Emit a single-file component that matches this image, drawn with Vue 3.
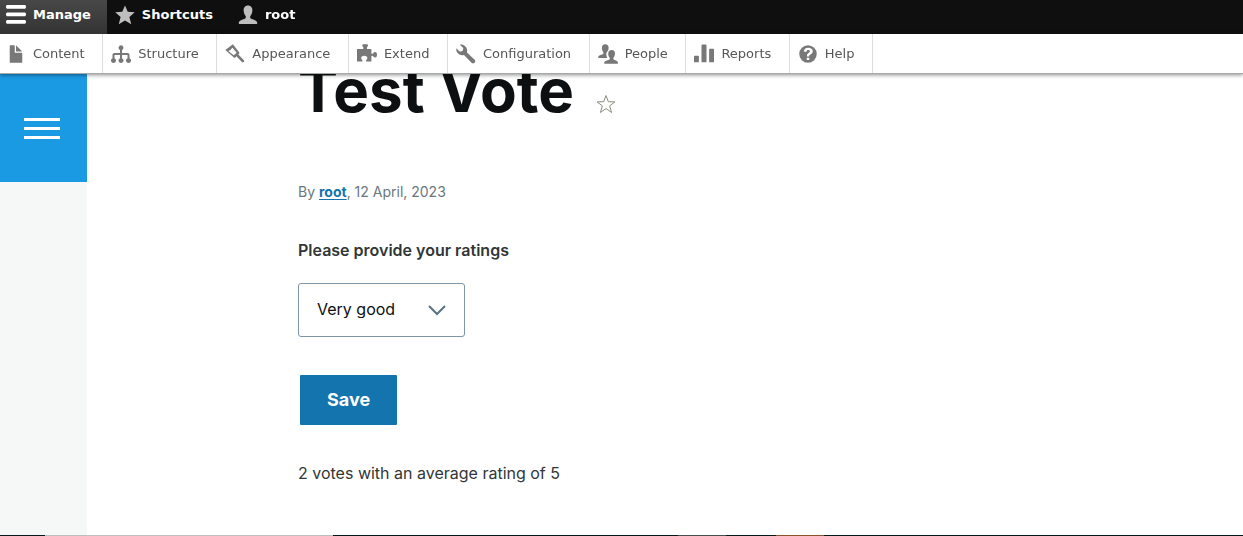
<script setup>
import { ref } from 'vue'

const rating = ref('Very good')
const ratings = ['Very poor', 'Poor', 'Average', 'Good', 'Very good']

const tabs = [
  { name: 'Manage', active: true, path: 'M14.75 6H1.25C.56 6 0 6.56 0 7.25v.5C0 8.44.56 9 1.25 9h13.5C15.44 9 16 8.44 16 7.75v-.5C16 6.56 15.44 6 14.75 6zM14.75 0H1.25C.56 0 0 .56 0 1.25v.5C0 2.44.56 3 1.25 3h13.5C15.44 3 16 2.44 16 1.75v-.5C16 .56 15.44 0 14.75 0zM14.75 12H1.25C.56 12 0 12.56 0 13.25v.5c0 .69.56 1.25 1.25 1.25h13.5c.69 0 1.25-.56 1.25-1.25v-.5c0-.69-.56-1.25-1.25-1.25z' },
  { name: 'Shortcuts', path: 'M8 .3l2.200 5.100 5.600.4-4.300 3.700 1.500 5.900L8 12.300l-5 3.100 1.500-5.900L.2 5.800l5.600-.4z' },
  { name: 'root', path: 'M8 .3C5.7.3 4.4 2 4.5 4.3c.1 1.7.6 3.2 1.5 4.3.5.7.4 1.9-.4 2.3C3.5 11.700.9 12.300.6 14.100c-.1.7.2 1.100.9 1.100h13c.7 0 1-.4.9-1.100-.3-1.800-2.900-2.400-5-3.200-.8-.4-.9-1.600-.4-2.300.9-1.100 1.400-2.600 1.500-4.300C11.600 2 10.300.3 8 .3z' }
]

const links = [
  { name: 'Content', path: 'M12.502 7h-5c-.276 0-.502-.225-.502-.5v-5c0-.275-.225-.5-.5-.5h-3c-.276 0-.5.225-.5.5v13.029c0 .275.225.5.5.5h9.002c.275 0 .5-.225.5-.5V7.5c0-.275-.225-.5-.5-.5zM8.502 6h4c.275 0 .34-.159.146-.354L8.355 1.354C8.16 1.159 8.002 1.225 8.002 1.5v4c0 .275.225.5.5.5z' },
  { name: 'Structure', path: 'M8 1a2 2 0 0 1 .8 3.800V7.200h4.400c1 0 1.600.6 1.600 1.600v2.500a2 2 0 1 1-1.600 0V8.800H8.800v2.500a2 2 0 1 1-1.600 0V8.800H2.800v2.500a2 2 0 1 1-1.600 0V8.800c0-1 .6-1.600 1.600-1.600h4.400V4.800A2 2 0 0 1 8 1z' },
  { name: 'Appearance', path: 'M6.300.2L11.300 6.500c.3.400.3.800 0 1.100l-.6.700 4.400 4.700c.8 1-.7 2.300-1.600 1.400L9.200 9.800l-.9.900c-.4.300-.8.300-1.200 0L.3 4.800zM6 3L4.900 3.900 4.400 5 3.200 5.200 2.700 5.600 6.900 8.900 9.300 6.900z' },
  { name: 'Extend', path: 'M4.200 1.200c0-.6.5-1 1.100-1h2.400c.6 0 1.100.4 1.100 1 0 .7-.8.800-.8 1.600V4h3.500v3.300c0 .5.900.8 1.400.2.500-.7 1-1.100 1.700-1.100.9 0 1.400.9 1.400 2.200s-.5 2.200-1.400 2.200c-.7 0-1.200-.4-1.700-1-.5-.6-1.400-.3-1.400.2v4H7.300v-1c0-.6 1-.8 1-1.900 0-1-1-1.800-2.500-1.800s-2.500.8-2.500 1.800c0 1.100 1 1.300 1 1.900v1H0V4h5V2.800c0-.8-.8-.9-.8-1.600z' },
  { name: 'Configuration', path: 'M14.900 12.600L8.800 6.700c.5-1.800-.1-3.800-1.500-5C6.100.6 4.600.200 3.100.5l2.500 2.500c.3.300.3.700.2 1L5.200 5.500 3.700 6c-.4.100-.8 0-1-.2L.3 3.400C0 4.800.5 6.300 1.500 7.400c1.300 1.400 3.200 1.800 4.900 1.300l6 6.200c.7.700 1.800.7 2.500 0s.700-1.700 0-2.300z' },
  { name: 'People', path: 'M5.800.2c1.800 0 2.800 1.200 2.700 3 0 1-.3 1.700-.7 2.300-1 .8-1.300 2.100-1.100 3.400.1.800.4 1.600.8 2.300H.7c-.5 0-.7-.3-.6-.800.3-1.300 2.200-1.800 3.700-2.300.7-.3.7-1.300.3-1.800C3.400 5.300 3.100 4.300 3.100 3.200c0-1.800.9-3 2.700-3zM10.900 4.700c1.900 0 2.800 1.300 2.700 3-.1 1.300-.5 2.300-1.100 3.100-.4.500-.3 1.400.3 1.700 1.300.6 2.900.9 3.200 2.400.1.600-.1.900-.7.900H5.500c-.5 0-.7-.3-.6-.9.300-1.500 2.500-1.800 4-2.400.7-.3.700-1.200.3-1.700-.6-.8-1-1.800-1-3.100-.1-1.700.9-3 2.700-3z' },
  { name: 'Reports', path: 'M.5 9.400h2.900c.3 0 .5.200.5.500v4.200c0 .3-.2.500-.5.500H.5c-.3 0-.5-.2-.5-.5V9.900c0-.3.200-.5.500-.5zM6.500.4h3c.3 0 .5.200.5.500v13.200c0 .3-.2.500-.5.500h-3c-.3 0-.5-.2-.5-.5V.9c0-.3.200-.5.500-.5zM12.600 3.800h2.900c.3 0 .5.200.5.500v9.800c0 .3-.2.500-.5.500h-2.900c-.3 0-.5-.2-.5-.5V4.300c0-.3.200-.5.500-.5z' },
  { name: 'Help', path: 'M8 1a7 7 0 1 0 0 14A7 7 0 0 0 8 1zM7 10.900h2v1.900H7zM8.900 9.900H7.100c0-1.500.3-2 1.300-2.700.8-.5 1.100-.9 1.100-1.400 0-.6-.5-1-1.300-1-.9 0-1.400.5-1.500 1.500l-2.100-.3C4.800 4.200 6 3 8.200 3c2.100 0 3.600 1.100 3.600 2.800 0 1.100-.6 1.900-1.800 2.600-.8.500-1.100.7-1.100 1.500z' }
]
</script>

<template>
  <div class="page">
    <header class="toolbar">
      <nav class="bar" aria-label="Toolbar">
        <a v-for="tab in tabs" :key="tab.name" href="#" class="tab" :class="{ active: tab.active }">
          <svg class="icon" viewBox="0 0 16 16" aria-hidden="true"><path :d="tab.path" /></svg>{{ tab.name }}
        </a>
      </nav>
      <nav class="tray" aria-label="Administration">
        <div class="links">
          <a v-for="link in links" :key="link.name" href="#" class="link">
            <svg class="icon" viewBox="0 0 16 16" aria-hidden="true"><path fill-rule="evenodd" :d="link.path" /></svg>{{ link.name }}
          </a>
        </div>
      </nav>
    </header>

    <div class="layout">
      <aside class="side">
        <button class="menu" type="button" aria-label="Menu">
          <span></span><span></span><span></span>
        </button>
      </aside>
      <main class="content">
        <div class="heading">
          <h1>Test Vote</h1>
          <a href="#" class="favorite" aria-label="Add to shortcuts">
            <svg viewBox="0 0 20 20" aria-hidden="true"><path d="M10 1.500l2.300 6.200 6.600.200-5.300 4 2 6.600-5.600-3.900-5.600 3.900 2-6.600-5.300-4 6.600-.200z" /></svg>
          </a>
        </div>
        <p class="meta">By <a href="#">root</a>, 12 April, 2023</p>
        <form @submit.prevent>
          <label for="rating">Please provide your ratings</label>
          <div class="select">
            <select id="rating" v-model="rating">
              <option v-for="item in ratings" :key="item">{{ item }}</option>
            </select>
            <svg viewBox="0 0 18 12" aria-hidden="true"><path d="M1 2l8 8 8-8" /></svg>
          </div>
          <button class="save" type="submit">Save</button>
        </form>
        <p class="result">2 votes with an average rating of 5</p>
      </main>
    </div>
    <div class="edge"></div>
  </div>
</template>

<style>
body {
  margin: 0;
  background: #fff;
}
</style>

<style scoped>
* {
  box-sizing: border-box;
}
.page {
  display: flex;
  flex-direction: column;
  min-height: 100vh;
  font-family: Inter, "Open Sans", sans-serif;
  font-size: 16px;
  line-height: 18px;
  color: #313637;
}
.toolbar {
  position: fixed;
  z-index: 2;
  top: 0;
  left: 0;
  right: 0;
  font: 13px/18px "DejaVu Sans", Verdana, sans-serif;
}
.bar {
  display: flex;
  height: 34px;
  background: #0f0f0f;
}
.tab,
.link {
  display: flex;
  align-items: center;
  gap: 7px;
  padding: 0 17px 0 8px;
  text-decoration: none;
}
.tab {
  padding-bottom: 5px;
  color: #fff;
  font-weight: bold;
}
.tab.active {
  padding: 0 16px 5px 6px;
  background: linear-gradient(#484848, #333);
}
.icon {
  flex: none;
  width: 20px;
  height: 20px;
  fill: #bebebe;
}
.active .icon {
  fill: #fff;
}
.tray {
  height: 40px;
  background: #fff;
  border-bottom: 1px solid #a5a9a8;
  box-shadow: 0 1px 4px rgba(0, 0, 0, 0.45);
}
.links {
  display: flex;
  max-width: 873px;
  height: 100%;
}
.link {
  flex: 1 0 auto;
  border-right: 1px solid #ddd;
  color: #565656;
}
.link:first-child {
  padding-left: 6px;
}
.link .icon {
  fill: #787878;
}
.layout {
  display: flex;
  flex: 1;
}
.side {
  flex: none;
  width: 87px;
  background: #f6f8f8;
}
.menu {
  display: flex;
  flex-direction: column;
  align-items: center;
  justify-content: flex-end;
  gap: 6px;
  width: 100%;
  height: 182px;
  padding: 0 3px 43px 0;
  border: 0;
  background: #1b9ae4;
}
.menu span {
  width: 36px;
  height: 3px;
  background: #fff;
}
.content {
  flex: 1;
  padding: 58px 40px 0 211px;
}
.heading {
  display: flex;
  align-items: center;
  gap: 22px;
}
h1 {
  margin: 0;
  font-size: 60px;
  line-height: 64px;
  font-weight: 700;
  color: #0d0f11;
}
.favorite {
  display: flex;
  padding-top: 28px;
}
.favorite svg {
  width: 20px;
  height: 20px;
  fill: none;
  stroke: #8e8c7e;
}
p {
  margin: 0;
}
.meta {
  margin-top: 61px;
  font-size: 14px;
  color: #6a777e;
}
.meta a {
  color: #1474ae;
  font-weight: 700;
  text-underline-offset: 2px;
}
label {
  display: block;
  margin-top: 40px;
  font-weight: 600;
}
.select {
  position: relative;
  width: 167px;
  margin-top: 24px;
}
select {
  display: block;
  width: 100%;
  height: 54px;
  padding: 0 40px 2px 18px;
  border: 1px solid #7e96a7;
  border-radius: 3px;
  background: #fff;
  color: #0d0f11;
  font: inherit;
  appearance: none;
}
.select svg {
  position: absolute;
  top: 21px;
  right: 19px;
  width: 18px;
  height: 12px;
  fill: none;
  stroke: #5b7282;
  stroke-width: 2;
  pointer-events: none;
}
.save {
  display: block;
  height: 50px;
  margin: 38px 0 0 2px;
  padding: 0 27px;
  border: 0;
  border-radius: 1px;
  background: #1474ae;
  color: #fff;
  font: 700 18px/24px Inter, "Open Sans", sans-serif;
}
.result {
  margin-top: 39px;
}
.edge {
  height: 1px;
  background: linear-gradient(to right, #06191a 45px, #bcc0bd 45px 333px, #06191a 333px 678px, #48504f 678px 726px, #06191a 726px 776px, #865327 776px 824px, #06191a 824px);
}
</style>
